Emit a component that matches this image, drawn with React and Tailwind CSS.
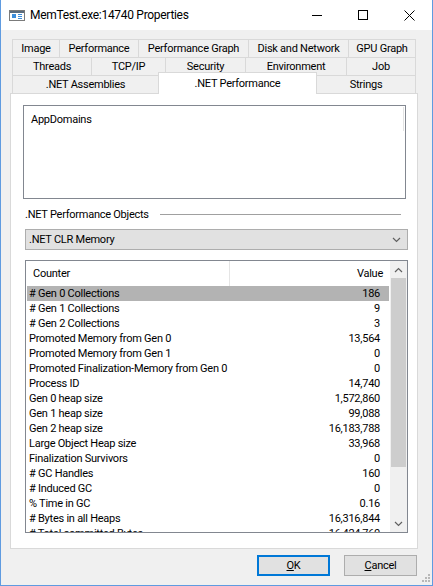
import React from "react";

const rowsTop = [
  ["Image", 47],
  ["Performance", 79],
  ["Performance Graph", 110],
  ["Disk and Network", 100],
  ["GPU Graph", 68],
];
const rowsMid = [
  ["Threads", 79],
  ["TCP/IP", 74],
  ["Security", 80],
  ["Environment", 101],
  ["Job", 70],
];

const counters = [
  ["# Gen 0 Collections", "186"],
  ["# Gen 1 Collections", "9"],
  ["# Gen 2 Collections", "3"],
  ["Promoted Memory from Gen 0", "13,564"],
  ["Promoted Memory from Gen 1", "0"],
  ["Promoted Finalization-Memory from Gen 0", "0"],
  ["Process ID", "14,740"],
  ["Gen 0 heap size", "1,572,860"],
  ["Gen 1 heap size", "99,088"],
  ["Gen 2 heap size", "16,183,788"],
  ["Large Object Heap size", "33,968"],
  ["Finalization Survivors", "0"],
  ["# GC Handles", "160"],
  ["# Induced GC", "0"],
  ["% Time in GC", "0.16"],
  ["# Bytes in all Heaps", "16,316,844"],
  ["# Total committed Bytes", "16,424,760"],
];

function TabRow({ tabs }) {
  return (
    <div className="flex h-[18px]">
      {tabs.map(([label, w], i) => (
        <div
          key={label}
          style={{ width: w }}
          className={
            "flex h-[18px] items-center justify-center border-l border-t border-[#d9d9d9] bg-[#f0f0f0] " +
            (i === tabs.length - 1 ? "border-r" : "")
          }
        >
          {label}
        </div>
      ))}
    </div>
  );
}

function Chevron({ up = false, className = "" }) {
  return (
    <svg width="9" height="6" viewBox="0 0 9 6" className={className}>
      <path
        d={up ? "M1 5 L4.5 1.5 L8 5" : "M1 1 L4.5 4.5 L8 1"}
        fill="none"
        stroke="currentColor"
        strokeWidth="1.2"
      />
    </svg>
  );
}

export default function App() {
  return (
    <div className="relative flex h-[586px] w-[433px] flex-col border-x border-b border-[#5f9be0] bg-[#f0f0f0] font-[family-name:Roboto,sans-serif] text-[11px] leading-[15px] tracking-[-0.25px] text-black">
      {/* title bar */}
      <div className="flex h-[30px] shrink-0 items-center bg-white">
        <svg width="16" height="11" viewBox="0 0 16 11" className="ml-[8px]">
          <rect x="0.5" y="0.5" width="15" height="10" fill="#fff" stroke="#7b7b7b" />
          <rect x="1" y="1" width="14" height="2" fill="#5a6b7d" />
          <rect x="3" y="4" width="4" height="4" fill="#3c8ddb" />
          <rect x="9" y="4" width="4" height="1" fill="#3c8ddb" />
          <rect x="9" y="6" width="4" height="1" fill="#3c8ddb" />
          <rect x="9" y="8" width="4" height="1" fill="#3c8ddb" />
        </svg>
        <span className="ml-[5px] text-[12px] tracking-[-0.3px]">MemTest.exe:14740 Properties</span>
        <div className="flex-1" />
        <div className="flex h-[30px] w-[46px] items-center justify-center">
          <div className="h-px w-[10px] bg-black" />
        </div>
        <div className="flex h-[30px] w-[46px] items-center justify-center">
          <div className="h-[10px] w-[10px] border border-black" />
        </div>
        <div className="flex h-[30px] w-[46px] items-center justify-center">
          <svg width="11" height="11" viewBox="0 0 11 11">
            <path d="M0.5 0.5 L10.5 10.5 M10.5 0.5 L0.5 10.5" stroke="#000" strokeWidth="1" />
          </svg>
        </div>
      </div>

      {/* body */}
      <div className="flex flex-col pl-[9px] pt-[9px]">
        <div className="ml-[2px] w-[404px]">
          <TabRow tabs={rowsTop} />
          <TabRow tabs={rowsMid} />
          <div className="flex h-[18px] items-start">
            <div className="flex h-[18px] w-[146px] items-center justify-center border-l border-t border-[#d9d9d9]">
              .NET Assemblies
            </div>
            <div className="relative z-10 -mt-[3px] flex h-[22px] w-[159px] items-center justify-center border-x border-t border-[#d9d9d9] bg-white pb-[1px]">
              .NET Performance
            </div>
            <div className="flex h-[18px] w-[99px] items-center justify-center border-r border-t border-[#d9d9d9]">
              Strings
            </div>
          </div>
        </div>

        {/* panel */}
        <div className="flex h-[456px] w-[408px] flex-col border border-[#d9d9d9] bg-white">
          <div className="relative ml-[12px] mt-[11px] h-[94px] w-[383px] border border-[#828790] pl-[7px] pt-[6px]">
            AppDomains
            <div className="absolute right-[1px] top-[1px] h-[24px] w-px bg-[#e3e3e3]" />
          </div>

          <div className="ml-[14px] mt-[8px] flex h-[15px] w-[376px] items-center">
            <span>.NET Performance Objects</span>
            <div className="ml-[11px] h-px flex-1 bg-[#a0a0a0]" />
          </div>

          <div className="ml-[14px] mt-[7px] flex h-[21px] w-[383px] items-center border border-[#adadad] bg-[#e1e1e1] pl-[3px] pr-[6px]">
            <span className="flex-1">.NET CLR Memory</span>
            <Chevron className="text-[#606060]" />
          </div>

          <div className="ml-[14px] mt-[10px] flex h-[273px] w-[383px] border border-[#828790]">
            <div className="flex flex-1 flex-col overflow-hidden">
              <div className="flex h-[25px] shrink-0 items-center">
                <div className="w-[203px] pl-[7px]">Counter</div>
                <div className="h-[25px] w-px bg-[#e5e5e5]" />
                <div className="flex-1 pr-[7px] text-right">Value</div>
              </div>
              <div className="flex flex-col px-[1px]">
                {counters.map(([name, val], i) => (
                  <div
                    key={name}
                    className={
                      "flex h-[15px] shrink-0 items-center pl-[2px] pr-[9px] " +
                      (i === 0 ? "bg-[#b3b3b3]" : "")
                    }
                  >
                    <span className="flex-1 whitespace-nowrap">{name}</span>
                    <span>{val}</span>
                  </div>
                ))}
              </div>
            </div>
            <div className="flex w-[17px] shrink-0 flex-col bg-[#f0f0f0]">
              <div className="flex h-[17px] items-center justify-center text-[#606060]">
                <Chevron up />
              </div>
              <div className="mx-[1px] h-[189px] bg-[#cdcdcd]" />
              <div className="flex-1" />
              <div className="flex h-[17px] items-center justify-center text-[#606060]">
                <Chevron />
              </div>
            </div>
          </div>
        </div>

        {/* buttons */}
        <div className="mt-[6px] flex w-[408px] justify-end gap-[14px] pr-[1px]">
          <button className="flex h-[21px] w-[73px] items-center justify-center border-2 border-[#0078d7] bg-[#e1e1e1]">
            <span>
              <span className="underline">O</span>K
            </span>
          </button>
          <button className="flex h-[21px] w-[73px] items-center justify-center border border-[#adadad] bg-[#e1e1e1]">
            <span>
              <span className="underline">C</span>ancel
            </span>
          </button>
        </div>
      </div>

      {/* size grip */}
      <svg width="10" height="10" viewBox="0 0 10 10" className="absolute bottom-[2px] right-[2px]">
        {[
          [8, 0],
          [8, 3],
          [5, 3],
          [8, 6],
          [5, 6],
          [2, 6],
        ].map(([x, y]) => (
          <rect key={x + "-" + y} x={x} y={y + 1} width="2" height="2" fill="#b8b8b8" />
        ))}
      </svg>
    </div>
  );
}
